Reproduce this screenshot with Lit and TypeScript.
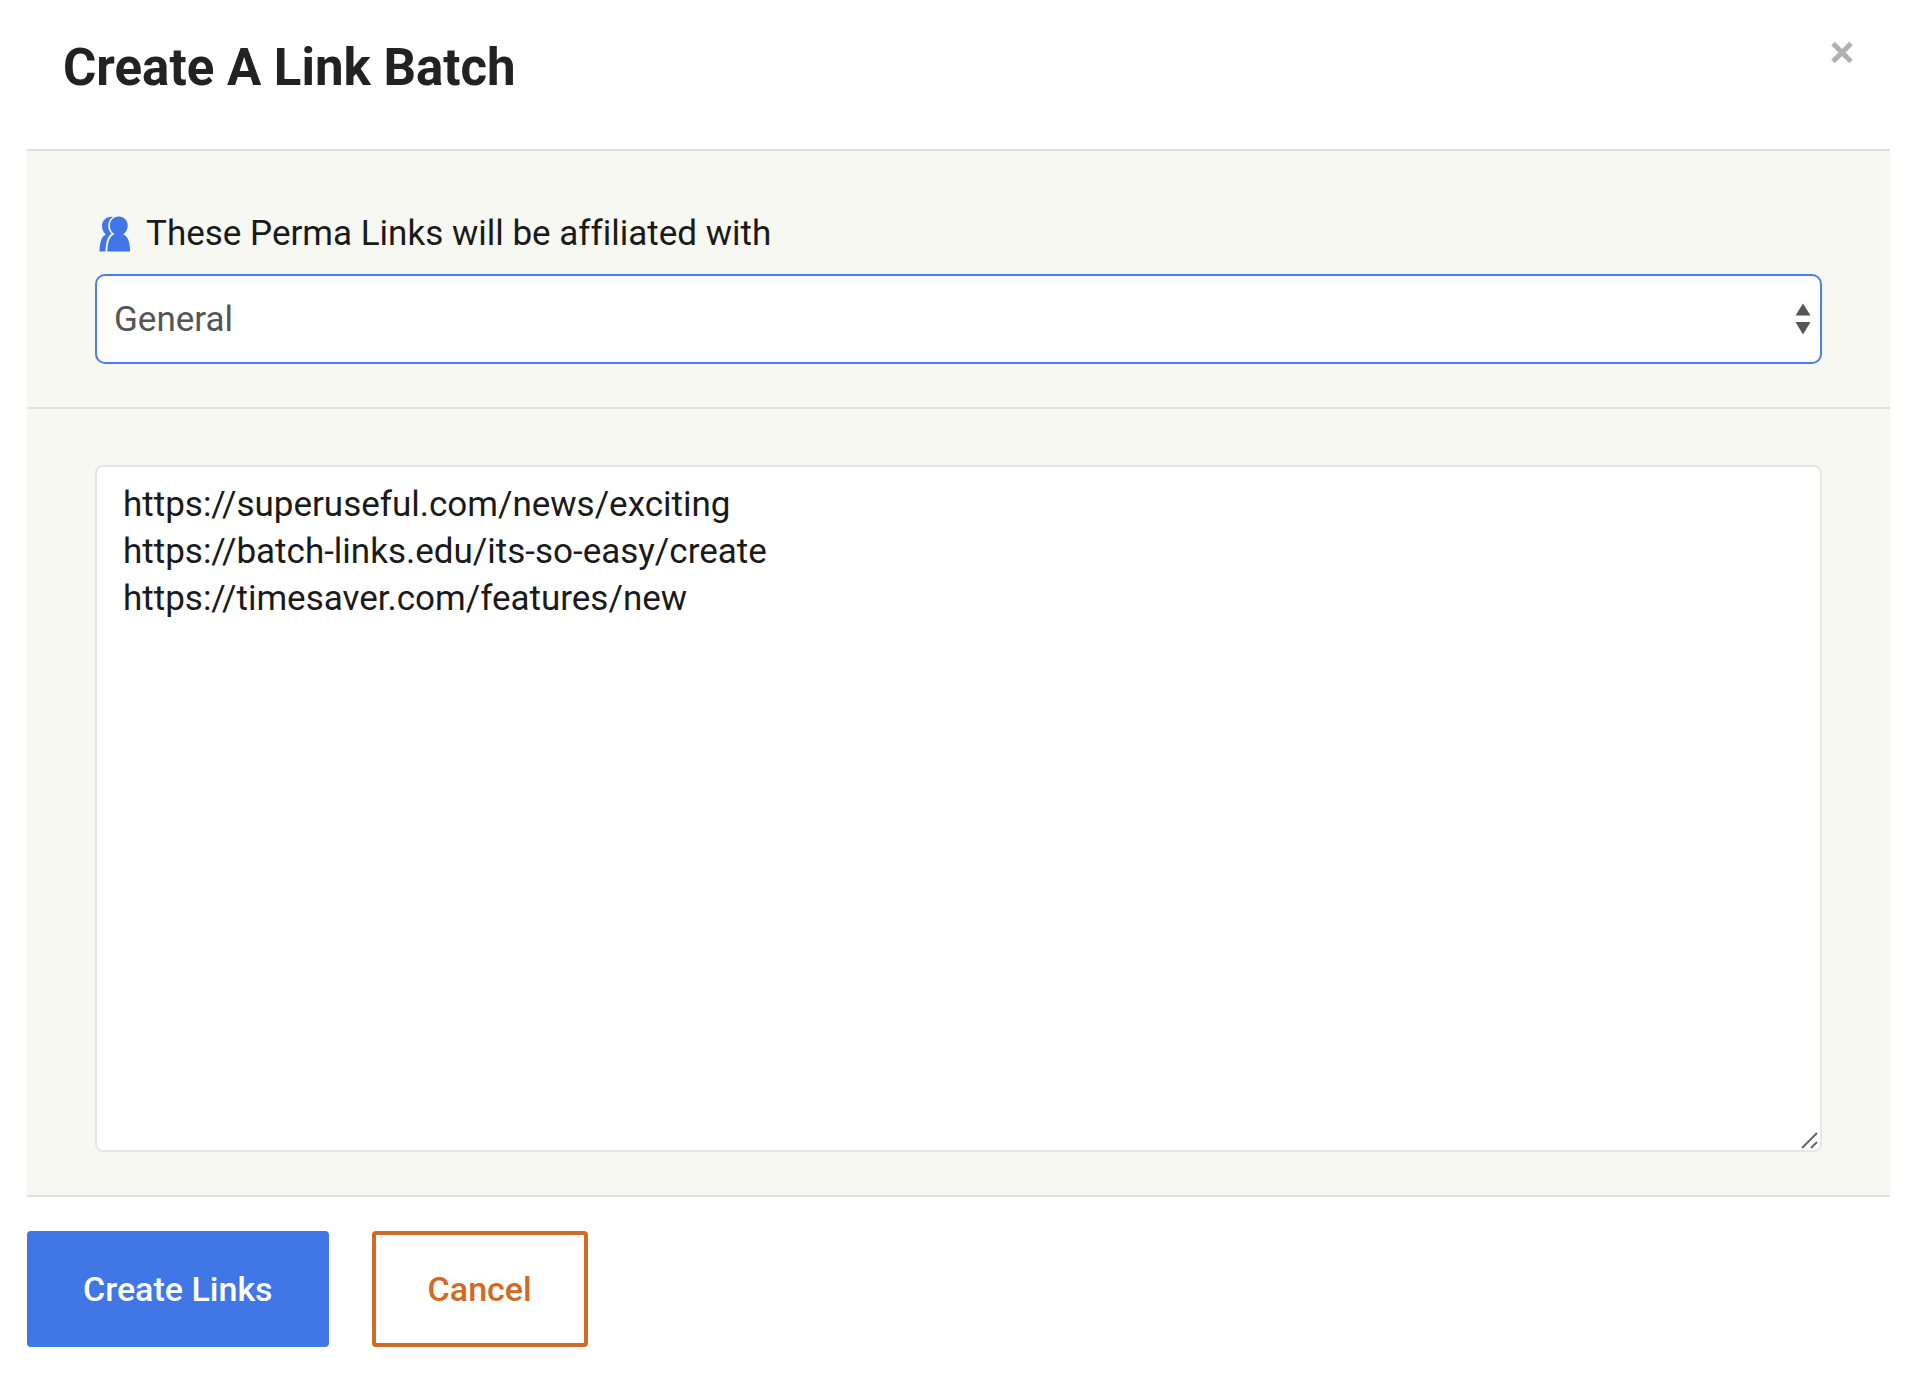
import { LitElement, html, css } from "lit";
import { customElement } from "lit/decorators.js";

@customElement("app-root")
export class AppRoot extends LitElement {
  static styles = css`
    :host {
      display: block;
      font-family: Roboto, "Liberation Sans", sans-serif;
      font-size: 35px;
      line-height: 48px;
      font-variant-ligatures: none;
      color: #1a1a1a;
      background: #fff;
    }
    * {
      box-sizing: border-box;
    }
    .dialog {
      padding: 0 26px 30px 27px;
    }
    .header {
      display: flex;
      justify-content: space-between;
      align-items: flex-start;
      padding: 36px 32px 49px 36px;
    }
    .title {
      margin: 0;
      font-size: 51px;
      line-height: 64px;
      font-weight: 700;
      color: #222;
    }
    .close {
      display: flex;
      padding: 0;
      border: 0;
      background: none;
      color: #b0b0b0;
      cursor: pointer;
    }
    .panel {
      background: #f7f8f2;
      border-bottom: 2px solid #e0e1db;
      padding: 56px 68px 43px;
    }
    .first {
      border-top: 2px solid #dcddd8;
      padding-top: 59px;
    }
    .label {
      display: flex;
      align-items: center;
      gap: 15px;
      padding-left: 4px;
      margin-bottom: 16px;
    }
    .icon {
      flex: none;
      color: #4176e6;
    }
    .field {
      position: relative;
      display: flex;
    }
    .select {
      appearance: none;
      width: 100%;
      height: 90px;
      padding: 2px 60px 0 17px;
      border: 2px solid #4a7eea;
      border-radius: 10px;
      background: #fff;
      color: #555;
      font: inherit;
      outline: none;
    }
    .arrows {
      position: absolute;
      right: 11px;
      top: 29px;
      pointer-events: none;
    }
    .urls {
      display: block;
      width: 100%;
      height: 687px;
      padding: 14px 26px;
      border: 2px solid #e6e6e5;
      border-radius: 8px;
      background: #fff;
      color: #1a1a1a;
      font: inherit;
      line-height: 47px;
      resize: none;
      outline: none;
    }
    .grip {
      position: absolute;
      right: 3px;
      bottom: 3px;
      pointer-events: none;
    }
    .actions {
      display: flex;
      gap: 43px;
      padding-top: 34px;
    }
    .button {
      height: 116px;
      padding: 0 52px;
      border: 4px solid #4176e6;
      border-radius: 4px;
      background: #4176e6;
      color: #fff;
      font: inherit;
      font-size: 34px;
      font-weight: 500;
      cursor: pointer;
    }
    .cancel {
      border-color: #cf6a27;
      background: #fff;
      color: #cf6a27;
    }
  `;

  render() {
    return html`
      <form class="dialog" @submit=${(e: Event) => e.preventDefault()}>
        <header class="header">
          <h1 class="title">Create A Link Batch</h1>
          <button class="close" type="button" aria-label="Close">
            <svg width="32" height="32" viewBox="0 0 32 32" aria-hidden="true">
              <path d="M7 7.500 L25 25.500 M25 7.500 L7 25.500" stroke="currentColor" stroke-width="5" fill="none" />
            </svg>
          </button>
        </header>
        <section class="panel first">
          <label class="label" for="folder">
            <svg class="icon" width="32" height="36" viewBox="0 0 32 36" aria-hidden="true">
              <path
                fill="currentColor"
                d="M3 10 C3 5 7 0.800 12.500 0.800 H14 C10.800 3 9.200 6 9.200 10 C9.200 13 10.400 15.700 12.500 17.700 C9 20 7 24.500 6.500 35.500 H0.500 C0.900 25.500 2.500 20.500 6.800 18.500 C4.500 16.500 3 13.500 3 10 Z"
              />
              <path
                fill="currentColor"
                d="M19.800 0.500 C25 0.500 28.700 4.500 28.700 9.800 C28.700 13.400 27 16.500 24 18.200 C28.800 20 30.700 25 31.200 35.500 H8.300 C8.800 25 10.800 20 15.600 18.200 C12.600 16.500 10.900 13.400 10.900 9.800 C10.900 4.500 14.600 0.500 19.800 0.500 Z"
              />
            </svg>
            <span>These Perma Links will be affiliated with</span>
          </label>
          <div class="field">
            <select class="select" id="folder">
              <option>General</option>
            </select>
            <svg class="arrows" width="16" height="32" viewBox="0 0 16 32" aria-hidden="true">
              <path fill="#555" d="M8 0.500 L15.500 12.500 H0.500 Z M0.500 19 H15.500 L8 31.500 Z" />
            </svg>
          </div>
        </section>
        <section class="panel">
          <div class="field">
            <textarea class="urls" aria-label="Links to create" spellcheck="false">
https://superuseful.com/news/exciting
https://batch-links.edu/its-so-easy/create
https://timesaver.com/features/new</textarea
            >
            <svg class="grip" width="18" height="18" viewBox="0 0 18 18" aria-hidden="true">
              <path d="M1 17 L16 2 M10 17 L16 11" stroke="#666" stroke-width="2" fill="none" />
            </svg>
          </div>
        </section>
        <footer class="actions">
          <button class="button" type="submit">Create Links</button>
          <button class="button cancel" type="button">Cancel</button>
        </footer>
      </form>
    `;
  }
}
